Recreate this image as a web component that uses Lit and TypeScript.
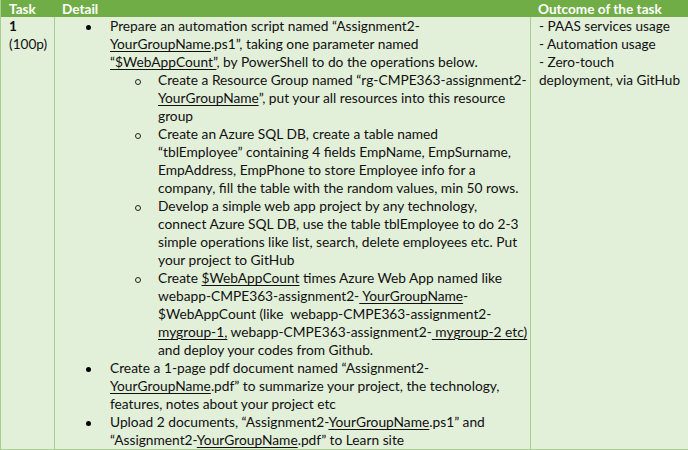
import { LitElement, html, css } from "lit";
import { customElement } from "lit/decorators.js";

const u = (s: string) => html`<u>${s}</u>`;

const line = (...parts: unknown[]) => html`<div class="line">${parts}</div>`;

@customElement("app-root")
export class AppRoot extends LitElement {
  static styles = css`
    :host {
      display: block;
      width: 688px;
      height: 450px;
      overflow: hidden;
      background: #fff;
      font-family: "Lato", "Carlito", sans-serif;
      font-size: 13.6px;
      line-height: 18px;
      color: #111;
    }
    .table {
      box-sizing: border-box;
      width: 688px;
      height: 450px;
      display: grid;
      grid-template-columns: 53px 476px 1fr;
      grid-template-rows: 17px 1fr;
      background: #e2efd9;
      border-left: 1px solid #a8d08d;
      border-bottom: 1px solid #a8d08d;
    }
    .head {
      background: #70ad47;
      color: #fff;
      font-weight: 700;
      line-height: 18px;
      padding-left: 8px;
      white-space: nowrap;
    }
    .cell {
      padding: 0 0 0 8px;
      white-space: nowrap;
    }
    .cell + .cell { border-left: 1px solid #a8d08d; }
    .detail { padding-left: 0; font-size: 13.76px; }
    .line { height: 18px; white-space: pre; }
    b { font-weight: 700; }
    u { text-decoration-thickness: 1px; text-underline-offset: 2px; }
    .item { display: grid; grid-template-columns: 55px 1fr; }
    .sub { display: grid; grid-template-columns: 48px 1fr; margin-left: 55px; }
    .mark { display: flex; justify-content: flex-end; height: 18px; align-items: center; padding-right: 19px; }
    .sub .mark { padding-right: 17px; }
    .dot { width: 5px; height: 5px; border-radius: 50%; background: #000; margin-top: 3px; }
    .ring { box-sizing: border-box; width: 6px; height: 6px; border-radius: 50%; border: 1px solid #222; margin-top: 4px; }
  `;

  private item(lines: unknown[]) {
    return html`<div class="item"><div class="mark"><span class="dot"></span></div><div>${lines}</div></div>`;
  }
  private sub(lines: unknown[]) {
    return html`<div class="sub"><div class="mark"><span class="ring"></span></div><div>${lines}</div></div>`;
  }

  render() {
    return html`
      <div class="table">
        <div class="head">Task</div>
        <div class="head">Detail</div>
        <div class="head">Outcome of the task</div>
        <div class="cell">
          ${line(html`<b>1</b>`)}
          ${line("(100p)")}
        </div>
        <div class="cell detail">
          ${this.item([
            line("Prepare an automation script named “Assignment2-"),
            line(u("YourGroupName"), ".ps1”, taking one parameter named"),
            line(u("“$WebAppCount”"), ", by PowerShell to do the operations below."),
          ])}
          ${this.sub([
            line("Create a Resource Group named “rg-CMPE363-assignment2-"),
            line(u("YourGroupName"), "”, put your all resources into this resource"),
            line("group"),
          ])}
          ${this.sub([
            line("Create an Azure SQL DB, create a table named"),
            line("“tblEmployee” containing 4 fields EmpName, EmpSurname,"),
            line("EmpAddress, EmpPhone to store Employee info for a"),
            line("company, fill the table with the random values, min 50 rows."),
          ])}
          ${this.sub([
            line("Develop a simple web app project by any technology,"),
            line("connect Azure SQL DB, use the table tblEmployee to do 2-3"),
            line("simple operations like list, search, delete employees etc. Put"),
            line("your project to GitHub"),
          ])}
          ${this.sub([
            line("Create ", u("$WebAppCount"), " times Azure Web App named like"),
            line("webapp-CMPE363-assignment2-", u(" YourGroupName"), "-"),
            line("$WebAppCount (like  webapp-CMPE363-assignment2-"),
            line(u("mygroup-1,"), " webapp-CMPE363-assignment2-", u(" mygroup-2 etc)")),
            line("and deploy your codes from Github."),
          ])}
          ${this.item([
            line("Create a 1-page pdf document named “Assignment2-"),
            line(u("YourGroupName"), ".pdf” to summarize your project, the technology,"),
            line("features, notes about your project etc"),
          ])}
          ${this.item([
            line("Upload 2 documents, “Assignment2-", u("YourGroupName"), ".ps1” and"),
            line("“Assignment2-", u("YourGroupName"), ".pdf” to Learn site"),
          ])}
        </div>
        <div class="cell">
          ${line("- PAAS services usage")}
          ${line("- Automation usage")}
          ${line("- Zero-touch")}
          ${line("deployment, via GitHub")}
        </div>
      </div>
    `;
  }
}
